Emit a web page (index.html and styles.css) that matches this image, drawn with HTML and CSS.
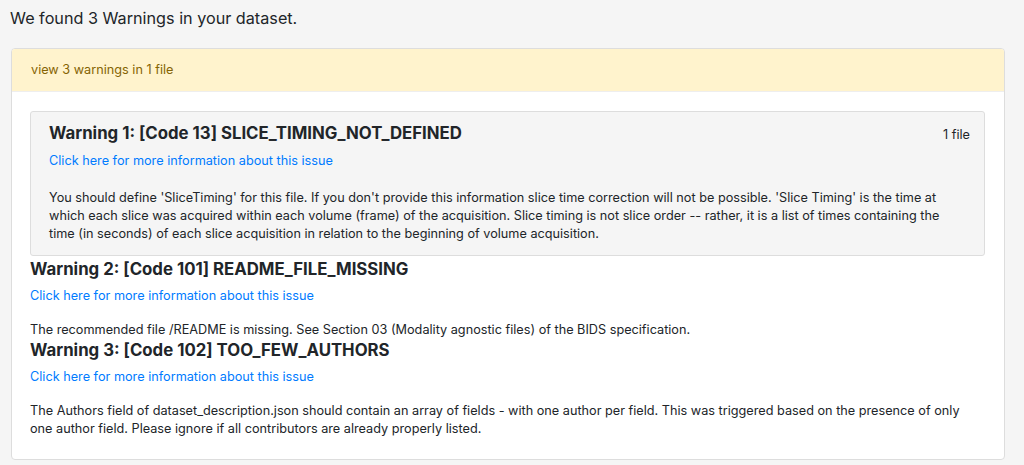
FILE: index.html
```html
<!DOCTYPE html>
<html lang="en">
<head>
  <meta charset="UTF-8" />
  <title>Validation Warnings</title>
  <link rel="stylesheet" href="styles.css">
</head>
<body>
  <h3 class="summary">We found 3 Warnings in your dataset.</h3>

  <div class="panel">
    <div class="panel-heading">view 3 warnings in 1 file</div>
    <div class="panel-body">
      <div class="issue boxed">
        <div class="issue-head">
          <h4>Warning 1: [Code 13] SLICE_TIMING_NOT_DEFINED</h4>
          <span class="file-count">1 file</span>
        </div>
        <a class="more" href="#">Click here for more information about this issue</a>
        <p>You should define 'SliceTiming' for this file. If you don't provide this information slice time correction will not be possible. 'Slice Timing' is the time at which each slice was acquired within each volume (frame) of the acquisition. Slice timing is not slice order -- rather, it is a list of times containing the time (in seconds) of each slice acquisition in relation to the beginning of volume acquisition.</p>
      </div>

      <div class="issue">
        <h4>Warning 2: [Code 101] README_FILE_MISSING</h4>
        <a class="more" href="#">Click here for more information about this issue</a>
        <p>The recommended file /README is missing. See Section 03 (Modality agnostic files) of the BIDS specification.</p>
      </div>

      <div class="issue">
        <h4>Warning 3: [Code 102] TOO_FEW_AUTHORS</h4>
        <a class="more" href="#">Click here for more information about this issue</a>
        <p>The Authors field of dataset_description.json should contain an array of fields - with one author per field. This was triggered based on the presence of only one author field. Please ignore if all contributors are already properly listed.</p>
      </div>
    </div>
  </div>
</body>
</html>
```

FILE: styles.css
```css
body {
  margin: 0;
  padding: 0 19px 0 11px;
  background: #f5f5f5;
  font-family: Inter, "Liberation Sans", sans-serif;
  color: #212529;
}
.summary {
  margin: 0 0 0 -1px;
  padding: 8px 0 0 0;
  height: 48px;
  box-sizing: border-box;
  font-size: 16.2px;
  font-weight: 400;
}
.panel {
  background: #fff;
  border: 1px solid #ddd;
  border-radius: 4px;
  overflow: hidden;
}
.panel-heading {
  background: #fff3cd;
  color: #856404;
  font-size: 12.7px;
  height: 42px;
  line-height: 42px;
  padding: 0 19px;
  border-bottom: 1px solid #eee;
}
.panel-body {
  padding: 19px 19px 21px 18px;
}
.issue h4 {
  margin: 0;
  font-size: 16.8px;
  font-weight: 700;
  line-height: 22px;
}
.boxed + .issue h4 {
  margin-top: 2px;
}
.issue-head {
  display: flex;
  justify-content: space-between;
  align-items: baseline;
}
.file-count {
  font-size: 12.7px;
}
.more {
  display: block;
  margin-top: 6px;
  color: #007bff;
  text-decoration: none;
  font-size: 12.7px;
  line-height: 19px;
}
.boxed .more {
  margin-top: 7px;
}
.issue p {
  margin: 16px 0 0 0;
  font-size: 12.7px;
  line-height: 18px;
}
.boxed p {
  margin: 19px 4px 0 0;
}
.boxed {
  background: #f5f5f5;
  border: 1px solid #ddd;
  border-radius: 3px;
  padding: 10px 14px 12px 18px;
}
```
